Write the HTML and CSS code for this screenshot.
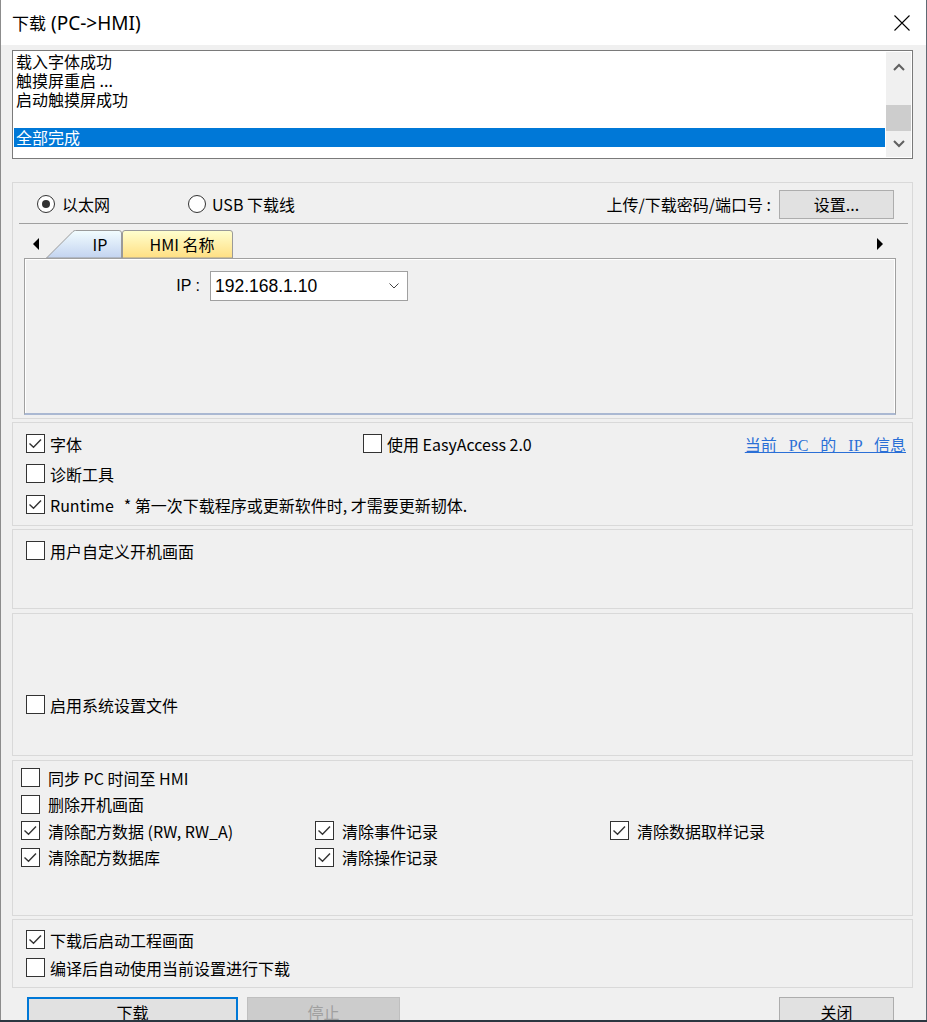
FILE: index.html
```html
<!DOCTYPE html>
<html>
<head>
<meta charset="utf-8">
<title>下载 (PC->HMI)</title>
<link rel="stylesheet" href="styles.css">
</head>
<body>
<div class="window">
  <div class="titlebar">
    <span class="title"><span class="t-cjk">下载</span> (PC-&gt;HMI)</span>
    <svg class="close" width="16" height="16" viewBox="0 0 16 16"><path d="M0.5 0.5L15.5 15.5M15.5 0.5L0.5 15.5" stroke="#000" stroke-width="1.1" fill="none"/></svg>
  </div>
  <div class="body">
    <div class="listbox">
      <div class="items">
        <div class="item">载入字体成功</div>
        <div class="item">触摸屏重启 ...</div>
        <div class="item">启动触摸屏成功</div>
        <div class="item"></div>
        <div class="item sel">全部完成</div>
      </div>
      <div class="vscroll">
        <div class="sb-btn up"><svg width="12" height="8" viewBox="0 0 12 8"><path d="M1 7L6 2L11 7" stroke="#606060" stroke-width="2" fill="none"/></svg></div>
        <div class="sb-track"><div class="sb-thumb"></div></div>
        <div class="sb-btn down"><svg width="12" height="8" viewBox="0 0 12 8"><path d="M1 1L6 6L11 1" stroke="#606060" stroke-width="2" fill="none"/></svg></div>
      </div>
    </div>

    <div class="group g1">
      <div class="conn-row">
        <div class="radio eth"><span class="rb on"></span>以太网</div>
        <div class="radio"><span class="rb usb"></span>USB 下载线</div>
        <span class="pw-label">上传/下载密码/端口号 :</span>
        <button class="btn btn-set">设置...</button>
      </div>
      <div class="sep"></div>
      <div class="tabstrip">
        <span class="arrow-l"></span>
        <div class="tab tab-ip">
          <svg class="tab-shape" width="76" height="28" viewBox="0 0 76 28">
            <defs><linearGradient id="gip" x1="0" y1="0" x2="0" y2="1"><stop offset="0" stop-color="#f2fdff"/><stop offset="1" stop-color="#c3d3f0"/></linearGradient></defs>
            <path d="M0.5 28L27 1.5Q28 0.5 29.5 0.5L73 0.5Q75.5 0.5 75.5 3L75.5 28Z" fill="url(#gip)" stroke="#9a9a9a" stroke-width="1"/>
          </svg>
          <span class="tab-text">IP</span>
        </div>
        <div class="tab tab-hmi">
          <svg class="tab-shape" width="111" height="28" viewBox="0 0 111 28">
            <defs><linearGradient id="ghmi" x1="0" y1="0" x2="0" y2="1"><stop offset="0" stop-color="#ffffcf"/><stop offset="1" stop-color="#ffdf82"/></linearGradient></defs>
            <path d="M0.5 28L0.5 3Q0.5 0.5 3 0.5L108 0.5Q110.5 0.5 110.5 3L110.5 28Z" fill="url(#ghmi)" stroke="#9a9a9a" stroke-width="1"/>
          </svg>
          <span class="tab-text">HMI 名称</span>
        </div>
        <span class="arrow-r"></span>
      </div>
      <div class="tabpanel">
        <div class="ip-row">
          <span class="ip-label">IP :</span>
          <div class="combo">
            <span class="combo-text">192.168.1.10</span>
            <svg width="10" height="6" viewBox="0 0 10 6"><path d="M0.5 0.5L5 5L9.5 0.5" stroke="#444" stroke-width="1" fill="none"/></svg>
          </div>
        </div>
      </div>
    </div>

    <div class="group g2">
      <div class="row">
        <div class="cb cb-font"><span class="box"><svg class="tick" width="19" height="19" viewBox="0 0 19 19"><path d="M3.5 9.5L7.5 13.2L15 5.5" stroke="#333" stroke-width="1.4" fill="none"/></svg></span>字体</div>
        <div class="cb"><span class="box"></span>使用 EasyAccess 2.0</div>
        <span class="link">当前 PC 的 IP 信息</span>
      </div>
      <div class="row r2">
        <div class="cb"><span class="box"></span>诊断工具</div>
      </div>
      <div class="row r3">
        <div class="cb"><span class="box"><svg class="tick" width="19" height="19" viewBox="0 0 19 19"><path d="M3.5 9.5L7.5 13.2L15 5.5" stroke="#333" stroke-width="1.4" fill="none"/></svg></span>Runtime</div>
        <span class="note">* 第一次下载程序或更新软件时, 才需要更新韧体.</span>
      </div>
    </div>

    <div class="group g3">
      <div class="row">
        <div class="cb"><span class="box"></span>用户自定义开机画面</div>
      </div>
    </div>

    <div class="group g4">
      <div class="row">
        <div class="cb"><span class="box"></span>启用系统设置文件</div>
      </div>
    </div>

    <div class="group g5">
      <div class="grid5">
        <div class="cb"><span class="box"></span>同步 PC 时间至 HMI</div>
        <div></div><div></div>
        <div class="cb"><span class="box"></span>删除开机画面</div>
        <div></div><div></div>
        <div class="cb"><span class="box"><svg class="tick" width="19" height="19" viewBox="0 0 19 19"><path d="M3.5 9.5L7.5 13.2L15 5.5" stroke="#333" stroke-width="1.4" fill="none"/></svg></span>清除配方数据 (RW, RW_A)</div>
        <div class="cb"><span class="box"><svg class="tick" width="19" height="19" viewBox="0 0 19 19"><path d="M3.5 9.5L7.5 13.2L15 5.5" stroke="#333" stroke-width="1.4" fill="none"/></svg></span>清除事件记录</div>
        <div class="cb"><span class="box"><svg class="tick" width="19" height="19" viewBox="0 0 19 19"><path d="M3.5 9.5L7.5 13.2L15 5.5" stroke="#333" stroke-width="1.4" fill="none"/></svg></span>清除数据取样记录</div>
        <div class="cb"><span class="box"><svg class="tick" width="19" height="19" viewBox="0 0 19 19"><path d="M3.5 9.5L7.5 13.2L15 5.5" stroke="#333" stroke-width="1.4" fill="none"/></svg></span>清除配方数据库</div>
        <div class="cb"><span class="box"><svg class="tick" width="19" height="19" viewBox="0 0 19 19"><path d="M3.5 9.5L7.5 13.2L15 5.5" stroke="#333" stroke-width="1.4" fill="none"/></svg></span>清除操作记录</div>
      </div>
    </div>

    <div class="group g6">
      <div class="row">
        <div class="cb"><span class="box"><svg class="tick" width="19" height="19" viewBox="0 0 19 19"><path d="M3.5 9.5L7.5 13.2L15 5.5" stroke="#333" stroke-width="1.4" fill="none"/></svg></span>下载后启动工程画面</div>
      </div>
      <div class="row r6">
        <div class="cb"><span class="box"></span>编译后自动使用当前设置进行下载</div>
      </div>
    </div>

    <div class="buttons">
      <button class="btn btn-dl">下载</button>
      <button class="btn btn-stop">停止</button>
      <button class="btn btn-close">关闭</button>
    </div>
  </div>
</div>
<div class="taskbar"></div>
</body>
</html>
```

FILE: styles.css
```css
* { box-sizing: border-box; }
html, body { margin: 0; padding: 0; background: #2b3640; }
body {
  font-family: "Noto Sans CJK SC", "Noto Sans", sans-serif;
  font-size: 16px;
  color: #000;
}
.window {
  width: 927px;
  height: 1020px;
  overflow: hidden;
  background: #f0f0f0;
  border-left: 1px solid #8c8c8c;
  border-right: 1px solid #5f6a74;
}
.titlebar {
  height: 45px;
  background: #fff;
  display: flex;
  align-items: center;
  padding-left: 11px;
  padding-right: 16px;
}
.title {
  font-family: "Noto Sans", "Noto Sans CJK SC", sans-serif;
  font-size: 19px;
  line-height: 22px;
  margin-top: 1px;
  white-space: nowrap;
}
.t-cjk { font-family: "Noto Sans CJK SC", sans-serif; font-size: 17px; }
.close { margin-left: auto; display: block; }

.body { padding: 5px 13px 0 11px; }

/* listbox */
.listbox {
  height: 109px;
  border: 1px solid #7a7a7a;
  background: #fff;
  display: flex;
}
.items { flex: 1; padding: 1px 1px 0 1px; }
.item { height: 19px; line-height: 19px; padding-left: 2px; white-space: nowrap; }
.item.sel { background: #0078d7; color: #fff; }
.vscroll {
  width: 25px;
  margin: 1px 1px 1px 0;
  background: #f0f0f0;
  display: flex;
  flex-direction: column;
}
.sb-btn { display: flex; align-items: center; justify-content: center; }
.sb-btn svg { display: block; }
.sb-btn.up { height: 29px; }
.sb-btn.down { height: 26px; }
.sb-track { flex: 1; display: flex; flex-direction: column; justify-content: flex-end; }
.sb-thumb { height: 26px; background: #cdcdcd; }

/* groups */
.group { border: 1px solid #d9d9d9; }
.g1 { margin-top: 23px; padding-bottom: 3px; }
.conn-row { display: flex; align-items: center; height: 30px; margin-top: 6px; }
.radio { display: flex; align-items: center; white-space: nowrap; }
.radio.eth { margin-left: 24px; width: 151px; }
.rb {
  width: 18px; height: 18px;
  border: 1px solid #333;
  border-radius: 50%;
  background: #fff;
  margin-right: 7px;
  display: flex; align-items: center; justify-content: center;
  flex: none;
}
.rb.usb { margin-right: 6px; }
.rb.on::after { content: ""; width: 8px; height: 8px; border-radius: 50%; background: #333; }
.pw-label { margin-left: auto; margin-right: 8px; white-space: nowrap; }
.btn {
  font-family: "Noto Sans CJK SC", "Noto Sans", sans-serif;
  font-size: 16px;
  background: #e1e1e1;
  border: 1px solid #adadad;
  color: #000;
  padding: 0;
  height: 30px;
  line-height: 26px;
}
.btn-set { width: 115px; height: 29px; margin-right: 18px; }
.sep { height: 1px; background: #a0a0a0; margin: 4px 4px 0 6px; }

.tabstrip { display: flex; align-items: flex-end; height: 28px; margin-top: 6px; }
.arrow-l {
  width: 0; height: 0;
  border-top: 6px solid transparent;
  border-bottom: 6px solid transparent;
  border-right: 6px solid #000;
  margin-left: 20px;
  align-self: center;
}
.arrow-r {
  width: 0; height: 0;
  border-top: 6px solid transparent;
  border-bottom: 6px solid transparent;
  border-left: 6px solid #000;
  margin-left: auto;
  margin-right: 29px;
  align-self: center;
}
.tab { position: relative; height: 28px; display: flex; align-items: center; justify-content: center; }
.tab-shape { position: absolute; left: 0; top: 0; display: block; }
.tab-text { position: relative; line-height: 20px; white-space: nowrap; }
.tab-ip { width: 76px; margin-left: 7px; padding-left: 32px; }
.tab-hmi { width: 111px; padding-left: 9px; }

.tabpanel {
  height: 157px;
  margin: 0 16px 0 11px;
  border: 1px solid #a0a0a0;
  border-bottom: 2px solid #aab8d2;
  box-shadow: inset 1px 1px 0 #fff, inset -1px 0 0 #fff;
  padding-top: 12px;
}
.ip-row { display: flex; align-items: center; height: 30px; }
.ip-label {
  width: 175px;
  text-align: right;
  margin-right: 10px;
  font-family: "Liberation Sans", Arial, sans-serif;
  font-size: 16px;
}
.combo {
  width: 198px; height: 30px;
  border: 1px solid #a0a0a0;
  background: #fff;
  display: flex; align-items: center;
  padding-left: 4px; padding-right: 8px;
}
.combo svg { display: block; }
.combo-text { flex: 1; font-family: "Liberation Sans", Arial, sans-serif; font-size: 17.5px; }

.row { display: flex; align-items: center; height: 19px; }
.cb { display: flex; align-items: center; white-space: nowrap; height: 19px; }
.box {
  width: 19px; height: 19px;
  border: 1px solid #333;
  background: #fff;
  margin-right: 5px;
  flex: none;
  position: relative;
}
.tick { position: absolute; left: -1px; top: -1px; display: block; }

.g2 { margin-top: 3px; height: 104px; padding: 11px 0 0 13px; }
.cb-font { width: 337px; }
.link {
  margin-left: auto;
  margin-right: 6px;
  color: #2a6fd6;
  text-decoration: underline;
  font-family: "Liberation Serif", "Noto Sans CJK SC", serif;
  word-spacing: 8px;
  white-space: nowrap;
}
.r2 { margin-top: 11px; }
.r3 { margin-top: 12px; }
.note { margin-left: 10px; white-space: nowrap; }

.g3 { margin-top: 3px; height: 80px; padding: 11px 0 0 13px; }
.g4 { margin-top: 4px; height: 143px; padding: 81px 0 0 13px; }
.g5 { margin-top: 4px; height: 156px; padding: 7px 0 0 8px; }
.grid5 {
  display: grid;
  grid-template-columns: 294px 295px auto;
  grid-auto-rows: 19px;
  row-gap: 7.67px;
}
.g5 .box { margin-right: 8px; }
.g6 { margin-top: 3px; height: 69px; padding: 10px 0 0 13px; }
.r6 { margin-top: 9px; }

.buttons { display: flex; margin-top: 9px; padding-left: 15px; }
.btn-dl { width: 211px; border: 2px solid #0078d7; }
.btn-stop { width: 153px; margin-left: 9px; background: #cccccc; border-color: #bfbfbf; color: #a0a0a0; }
.btn-close { width: 115px; margin-left: auto; margin-right: 19px; }

.taskbar { height: 2px; background: #2b3640; }
```
